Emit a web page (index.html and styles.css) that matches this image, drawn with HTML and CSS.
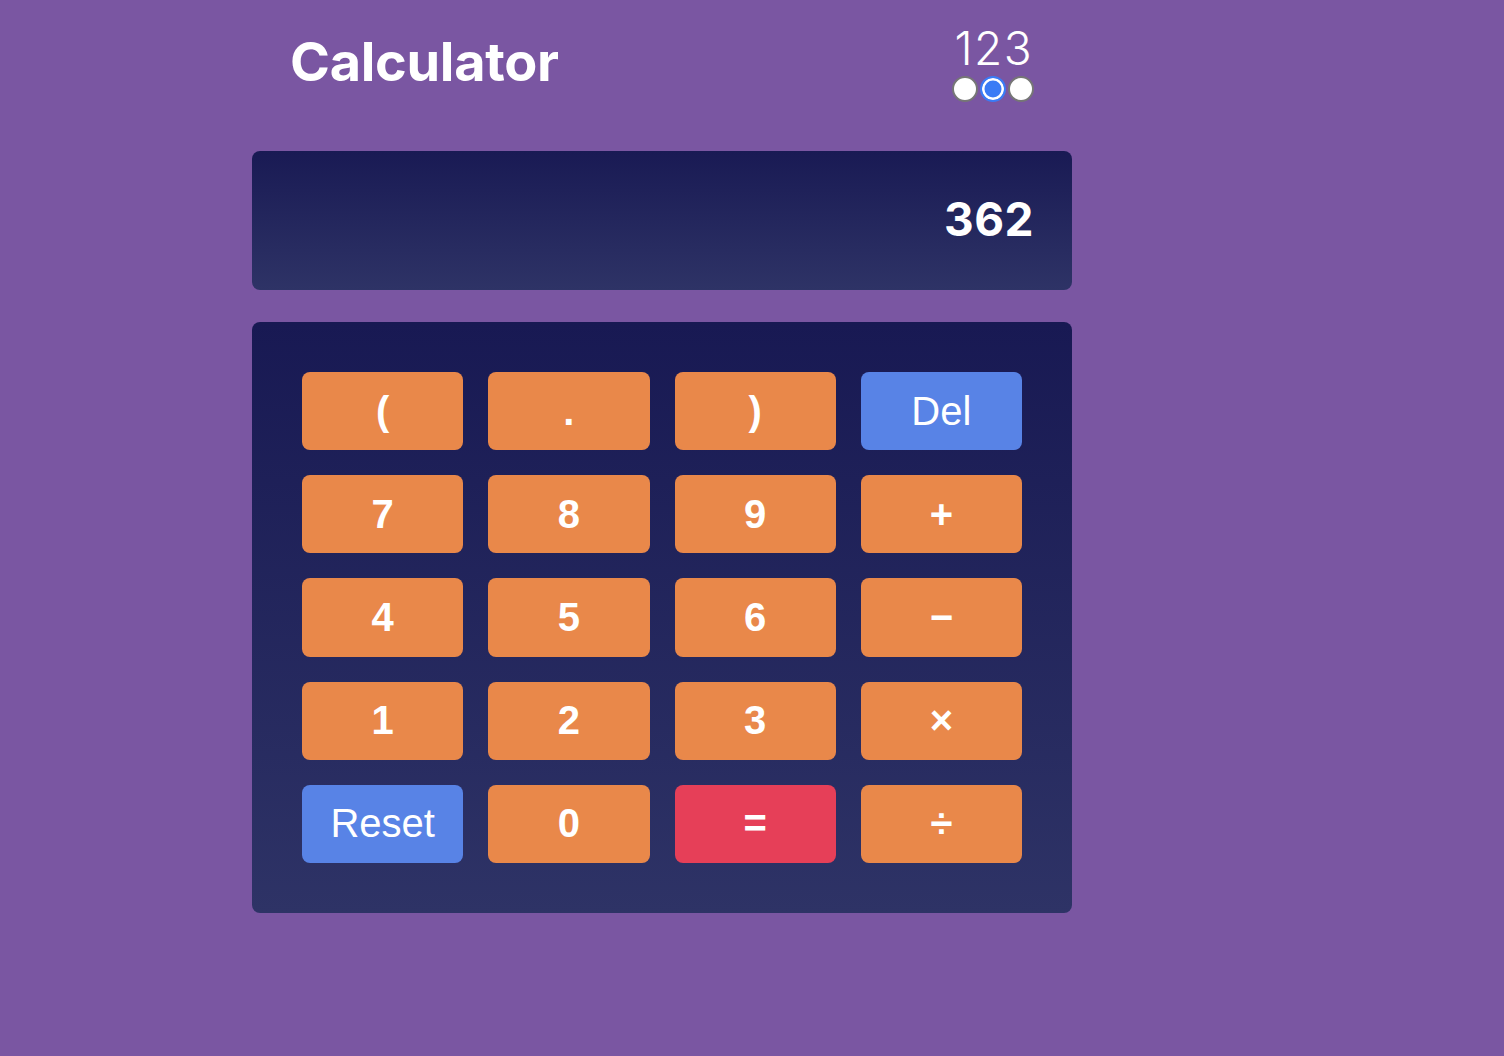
FILE: index.html
```html
<!DOCTYPE html>
<html lang="en">
<head>
<meta charset="utf-8">
<title>Calculator</title>
<link rel="stylesheet" href="styles.css">
</head>
<body>
<main class="calc">
  <header class="calc-header">
    <h1 class="title">Calculator</h1>
    <div class="theme">
      <div class="theme-nums">123</div>
      <div class="theme-radios">
        <span class="radio"></span>
        <span class="radio checked"></span>
        <span class="radio"></span>
      </div>
    </div>
  </header>
  <section class="display"><span class="value">362</span></section>
  <section class="keypad">
    <button class="key">(</button>
    <button class="key">.</button>
    <button class="key">)</button>
    <button class="key key-blue">Del</button>
    <button class="key">7</button>
    <button class="key">8</button>
    <button class="key">9</button>
    <button class="key">+</button>
    <button class="key">4</button>
    <button class="key">5</button>
    <button class="key">6</button>
    <button class="key">&minus;</button>
    <button class="key">1</button>
    <button class="key">2</button>
    <button class="key">3</button>
    <button class="key">&times;</button>
    <button class="key key-blue">Reset</button>
    <button class="key">0</button>
    <button class="key key-red">=</button>
    <button class="key">&divide;</button>
  </section>
</main>
</body>
</html>
```

FILE: styles.css
```css
html, body {
  margin: 0;
  padding: 0;
}
body {
  background: #7a56a2;
  min-height: 1056px;
  font-family: Inter, "Liberation Sans", Arial, sans-serif;
  color: #fff;
}
.calc {
  width: 820px;
  margin-left: 252px;
  padding-top: 22px;
}
.calc-header {
  display: flex;
  justify-content: space-between;
  align-items: flex-start;
  padding: 0 38px 0 38px;
  height: 129px;
}
.title {
  margin: 10px 0 0 0;
  font-size: 54px;
  font-weight: 700;
  letter-spacing: -0.3px;
  line-height: 60px;
}
.theme {
  display: flex;
  flex-direction: column;
  align-items: center;
  width: 82px;
}
.theme-nums {
  font-size: 46px;
  font-weight: 300;
  line-height: 52px;
  letter-spacing: 1.5px;
  margin-right: -1.5px;
  white-space: nowrap;
}
.theme-radios {
  display: flex;
  gap: 2px;
  margin-top: 2px;
}
.radio {
  width: 22px;
  height: 22px;
  border-radius: 50%;
  background: #fff;
  border: 2px solid #767676;
}
.radio.checked {
  background: #3a7bf5;
  border-color: #3a7bf5;
  box-shadow: inset 0 0 0 2.5px #fff;
}
.display {
  height: 139px;
  border-radius: 8px;
  background: linear-gradient(to bottom, #191a54, #2e3366);
  display: flex;
  align-items: center;
  justify-content: flex-end;
  padding: 0 38px;
}
.value {
  font-size: 46px;
  font-weight: 700;
  letter-spacing: 0.5px;
  margin-top: -4px;
}
.keypad {
  margin-top: 32px;
  border-radius: 8px;
  background: linear-gradient(to bottom, #181953, #2e3366);
  padding: 50px;
  display: grid;
  grid-template-columns: repeat(4, 1fr);
  grid-template-rows: repeat(5, 78.2px);
  gap: 25px;
}
.key {
  border: none;
  border-radius: 8px;
  background: #e9884a;
  color: #fff;
  font-family: "Liberation Sans", Arial, sans-serif;
  font-size: 40px;
  font-weight: 700;
  padding: 0;
  display: flex;
  align-items: center;
  justify-content: center;
}
.key-blue {
  background: #5883e6;
  font-weight: 400;
}
.key-red {
  background: #e63f58;
}
```
